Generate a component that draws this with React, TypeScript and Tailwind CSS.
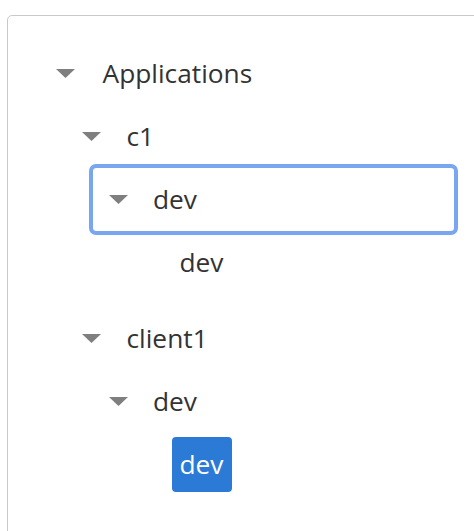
import React from "react";

type Node = {
  label: string;
  children?: Node[];
  focused?: boolean;
  selected?: boolean;
};

const tree: Node = {
  label: "Applications",
  children: [
    {
      label: "c1",
      children: [{ label: "dev", focused: true, children: [{ label: "dev" }] }],
    },
    {
      label: "client1",
      children: [{ label: "dev", children: [{ label: "dev", selected: true }] }],
    },
  ],
};

function Caret() {
  return (
    <svg width="19" height="9" viewBox="0 0 19 9" className="shrink-0">
      <path d="M0 0 H19 L9.5 9 Z" fill="#7f7f7f" />
    </svg>
  );
}

function TreeRow({ node, depth }: { node: Node; depth: number }) {
  const hasChildren = !!node.children?.length;
  return (
    <div
      className={
        "flex h-[63px] items-center rounded-[3px] pl-4 " +
        (node.focused
          ? "outline-4 outline-[#79a6ee] shadow-[0_0_3px_2px_rgba(121,166,238,0.5)]"
          : "")
      }
    >
      {hasChildren ? <Caret /> : <span className="w-[19px] shrink-0" />}
      <span
        className={
          (depth === 0 ? "ml-[20px] " : "ml-[17.5px] ") +
          "rounded-[4px] px-2 py-2 text-[26.3px] leading-[39px] " +
          (node.selected ? "bg-[#2b7ad6] text-white" : "text-[#333333]")
        }
      >
        {node.label}
      </span>
    </div>
  );
}

function TreeNode({ node, depth }: { node: Node; depth: number }) {
  return (
    <div className={depth === 1 ? "mb-[13px] last:mb-0" : ""}>
      <TreeRow node={node} depth={depth} />
      {node.children ? (
        <div className="ml-[26.5px]">
          {node.children.map((child, i) => (
            <TreeNode key={i} node={child} depth={depth + 1} />
          ))}
        </div>
      ) : null}
    </div>
  );
}

export default function App() {
  return (
    <div
      className="h-[531px] w-[474px] overflow-hidden bg-white"
      style={{ fontFamily: '"Open Sans", "Noto Sans", sans-serif' }}
    >
      <div className="ml-[7px] mt-[15px] h-[560px] w-[520px] rounded-[5px] border-[1.5px] border-[#c9c9c9] bg-white">
        <div className="w-[446px] pl-[31.5px] pt-[25.5px]">
          <TreeNode node={tree} depth={0} />
        </div>
      </div>
    </div>
  );
}
